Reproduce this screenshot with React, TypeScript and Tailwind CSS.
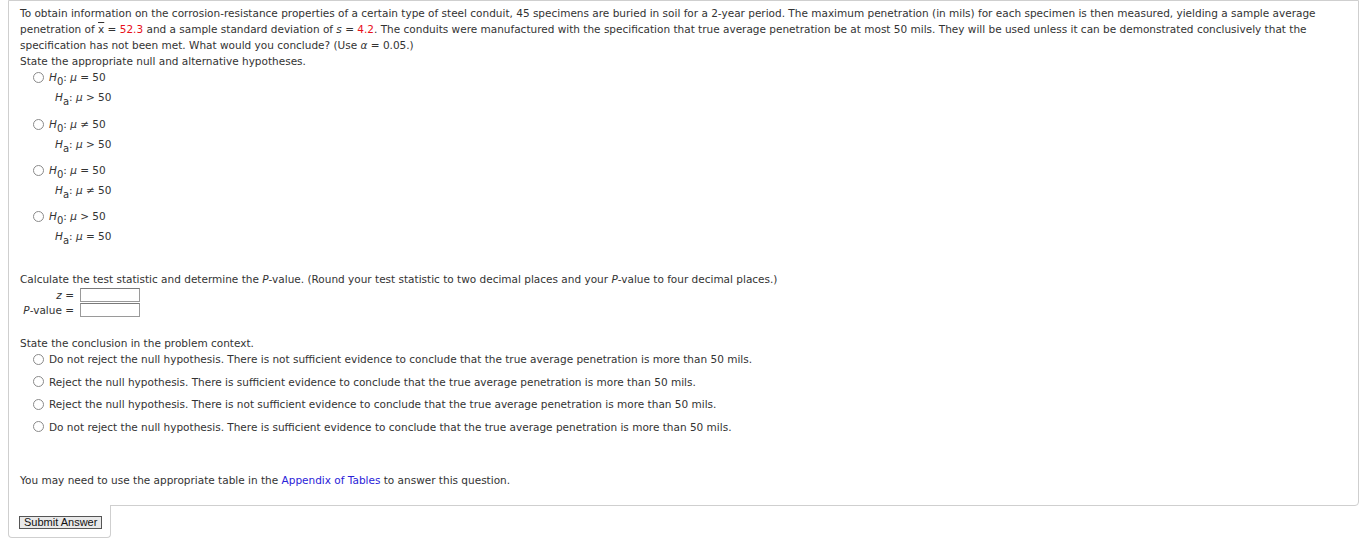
import React from "react";

const RED = "text-[#e8101a]";

const Radio = () => (
    <span className="inline-block w-[11px] h-[11px] rounded-full border border-[#8a8a8a] bg-white shrink-0" />
);

const H = ({ sub }: { sub: string }) => (
    <span>
        <i>H</i>
        <sub className="text-[10px] -bottom-[0.35em]">{sub}</sub>
    </span>
);

const hypotheses: [string, string][] = [
    ["=", ">"],
    ["≠", ">"],
    ["=", "≠"],
    [">", "="],
];

const conclusions = [
    "Do not reject the null hypothesis. There is not sufficient evidence to conclude that the true average penetration is more than 50 mils.",
    "Reject the null hypothesis. There is sufficient evidence to conclude that the true average penetration is more than 50 mils.",
    "Reject the null hypothesis. There is not sufficient evidence to conclude that the true average penetration is more than 50 mils.",
    "Do not reject the null hypothesis. There is sufficient evidence to conclude that the true average penetration is more than 50 mils.",
];

const App = () => {
    return (
        <div className="min-h-[541px] bg-white font-['DejaVu_Sans','Noto_Sans',sans-serif] text-[10.5px] leading-4 text-[#333]">
            {/* Question box */}
            <div className="ml-2 w-[1351px] border border-[#cfcfcf] rounded-br-[4px] px-[11px] pt-[4px] pb-[17px]">
                <p className="whitespace-nowrap">
                    To obtain information on the corrosion-resistance properties of a certain type of steel conduit, 45 specimens are buried in soil for a 2-year period. The maximum penetration (in mils) for each specimen is then measured, yielding a sample average
                    <br />
                    penetration of <span className="overline">x</span> = <span className={RED}>52.3</span> and a sample standard deviation of <i>s</i> = <span className={RED}>4.2</span>. The conduits were manufactured with the specification that true average penetration be at most 50 mils. They will be used unless it can be demonstrated conclusively that the
                    <br />
                    specification has not been met. What would you conclude? (Use <i>α</i> = 0.05.)
                </p>
                <p>State the appropriate null and alternative hypotheses.</p>

                {/* Hypotheses options */}
                <div className="flex flex-col gap-[10px] pl-[13px]">
                    {hypotheses.map(([h0, ha], i) => (
                        <div key={i} className={i === 0 ? "mb-px" : ""}>
                            <div className="flex items-center h-4 gap-[5px]">
                                <Radio />
                                <span>
                                    <H sub="0" />: <i>μ</i> {h0} 50
                                </span>
                            </div>
                            <div className="mt-[4px] h-4 pl-[22px]">
                                <H sub="a" />: <i>μ</i> {ha} 50
                            </div>
                        </div>
                    ))}
                </div>

                <p className="mt-[27px]">
                    Calculate the test statistic and determine the <i>P</i>-value. (Round your test statistic to two decimal places and your <i>P</i>-value to four decimal places.)
                </p>
                <div className="flex flex-col">
                    <div className="flex items-center h-[15px]">
                        <span className="w-[54px] text-right">
                            <i>z</i> =
                        </span>
                        <span className="ml-[6px] w-[60px] h-[14px] border border-[#9a9a9a] border-t-[#7a7a7a] bg-white" />
                    </div>
                    <div className="flex items-center h-[15px] -ml-[2px]">
                        <span className="w-[56px] text-right">
                            <i>P</i>-value =
                        </span>
                        <span className="ml-[6px] w-[60px] h-[14px] border border-[#9a9a9a] border-t-[#7a7a7a] bg-white" />
                    </div>
                </div>

                <p className="mt-[18px]">State the conclusion in the problem context.</p>
                <div className="flex flex-col gap-[6.5px] pl-[13px]">
                    {conclusions.map((c, i) => (
                        <div key={i} className="flex items-center h-4 gap-[5px]">
                            <Radio />
                            <span>{c}</span>
                        </div>
                    ))}
                </div>

                <p className="mt-[37px]">
                    You may need to use the appropriate table in the{" "}
                    <span className="text-[#2a22d8]">Appendix of Tables</span> to answer this question.
                </p>
            </div>

            {/* Submit tab */}
            <div className="-mt-px ml-2 w-[103px] h-[33px] border border-t-0 border-[#cfcfcf] rounded-b-[4px] bg-white pl-[10px] pt-[11px]">
                <button className="block h-[13px] px-[4px] border border-[#555] bg-[#e9e9e9] font-['Liberation_Sans',Arial,sans-serif] text-[11px] leading-[11px] text-[#111]">
                    Submit Answer
                </button>
            </div>
        </div>
    );
};

export default App;
